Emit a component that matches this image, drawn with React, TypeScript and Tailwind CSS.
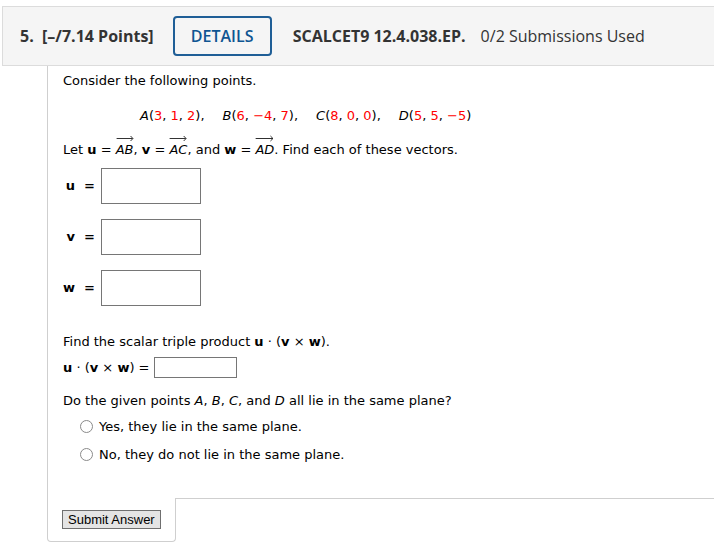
import React from 'react';

const verdana = { fontFamily: '"DejaVu Sans", Verdana, sans-serif' };

// vector name with arrow on top (AB, AC, AD)
const Vec: React.FC<{ name: string }> = ({ name }) => (
  <span className="relative inline-block italic">
    <svg className="absolute left-0 -top-[7px]" width="100%" height="7" viewBox="0 0 30 7" preserveAspectRatio="none">
      <line x1="1" y1="3.5" x2="28" y2="3.5" stroke="#000" strokeWidth="1" />
      <path d="M24.5 1 L28.5 3.5 L24.5 6" fill="none" stroke="#000" strokeWidth="1" />
    </svg>
    {name}
  </span>
);

const R: React.FC<{ children: React.ReactNode }> = ({ children }) => (
  <span className="text-[#ff0000]">{children}</span>
);

const Point: React.FC<{ l: string; v: string[]; last?: boolean }> = ({ l, v, last }) => (
  <span className={last ? '' : 'mr-[18px]'}>
    <i>{l}</i>(
    {v.map((n, i) => (
      <React.Fragment key={i}>
        <R>{n}</R>
        {i < v.length - 1 ? ', ' : ''}
      </React.Fragment>
    ))}
    ){last ? '' : ','}
  </span>
);

const Radio: React.FC<{ label: string }> = ({ label }) => (
  <label className="flex items-center gap-[6px]">
    <span className="w-[13px] h-[13px] rounded-full border border-[#8a8a8a] bg-white" />
    <span>{label}</span>
  </label>
);

const Box: React.FC = () => (
  <div className="w-[100px] h-[36px] border border-[#767676] bg-white" />
);

export default function App() {
  return (
    <div className="w-[714px] h-[555px] bg-white overflow-hidden pt-[6px] pl-[2px]">
      {/* header */}
      <div
        className="h-[60px] bg-[#f5f5f5] border border-r-0 border-[#dcdcdc] flex items-center pl-[17px] text-[16px] text-[#333]"
        style={{ fontFamily: '"Open Sans", "Noto Sans", sans-serif' }}
      >
        <span className="font-bold">5.&nbsp; [–/7.14 Points]</span>
        <span className="ml-[19px] h-[40px] w-[99px] border-2 border-[#1f5e96] rounded-[4px] flex items-center justify-center text-[#0f5592] font-semibold">
          DETAILS
        </span>
        <span className="ml-[21px] font-bold">SCALCET9 12.4.038.EP.</span>
        <span className="ml-[15px]">0/2 Submissions Used</span>
      </div>

      {/* question body */}
      <div className="ml-[45px] text-[13px] text-black" style={verdana}>
        <div className="border-l border-[#cfcfcf] pl-[15px] pt-[7px] h-[432px]">
          <p className="leading-[16px]">Consider the following points.</p>
          <p className="mt-[19px] ml-[77px] leading-[16px] whitespace-pre">
            <Point l="A" v={['3', '1', '2']} />
            <Point l="B" v={['6', '\u22124', '7']} />
            <Point l="C" v={['8', '0', '0']} />
            <Point l="D" v={['5', '5', '\u22125']} last />
          </p>
          <p className="mt-[18px] leading-[16px]">
            Let <b>u</b> = <Vec name="AB" />, <b>v</b> = <Vec name="AC" />, and <b>w</b> = <Vec name="AD" />. Find each of
            these vectors.
          </p>

          <div className="mt-[10px] flex flex-col gap-[15px]">
            {['u', 'v', 'w'].map((n) => (
              <div key={n} className="flex items-center">
                <span className="w-[34px] text-right font-bold pr-[2px]">{n} &nbsp;=</span>
                <span className="ml-[4px]" />
                <Box />
              </div>
            ))}
          </div>

          <p className="mt-[28px] leading-[16px]">
            Find the scalar triple product <b>u</b> · (<b>v</b> × <b>w</b>).
          </p>
          <div className="mt-[7px] flex items-center">
            <span>
              <b>u</b> · (<b>v</b> × <b>w</b>) =
            </span>
            <span className="ml-[4px] w-[83px] h-[21px] border border-[#767676] bg-white" />
          </div>

          <p className="mt-[15px] leading-[16px]">
            Do the given points <i>A</i>, <i>B</i>, <i>C</i>, and <i>D</i> all lie in the same plane?
          </p>
          <div className="mt-[9px] ml-[17px] flex flex-col gap-[11px] leading-[17px]">
            <Radio label="Yes, they lie in the same plane." />
            <Radio label="No, they do not lie in the same plane." />
          </div>
        </div>

        {/* submit area */}
        <div className="flex">
          <div className="w-[129px] h-[44px] border border-t-0 border-[#cfcfcf] rounded-b-[4px] pl-[14px] pt-[12px]">
            <button
              className="h-[19px] px-[5px] bg-[#e4e4e4] border border-[#6f6f6f] text-[13px] leading-[15px] text-black"
              style={{ fontFamily: '"Liberation Sans", Arial, sans-serif' }}
            >
              Submit Answer
            </button>
          </div>
          <div className="flex-1 border-t border-[#cfcfcf]" />
        </div>
      </div>
    </div>
  );
}
